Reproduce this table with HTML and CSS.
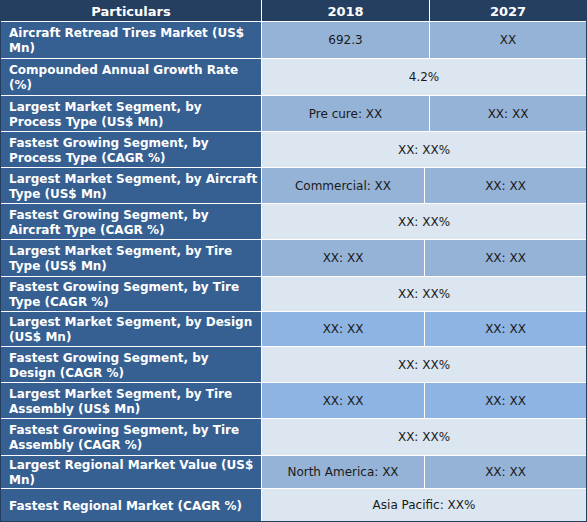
FILE: index.html
```html
<!DOCTYPE html>
<html lang="en">
<head>
    <meta charset="UTF-8">
    <meta name="viewport" content="width=device-width, initial-scale=1.0">
    <title>Aircraft Retread Tires Market - Report Scope</title>
    <link rel="stylesheet" href="styles.css">
</head>
<body>
    <div class="scope-table">
        <div class="row head wide">
            <div class="cell">Particulars</div>
            <div class="cell">2018</div>
            <div class="cell">2027</div>
        </div>

        <div class="row wide">
            <div class="cell label">Aircraft Retread Tires Market (US$ Mn)</div>
            <div class="cell value">692.3</div>
            <div class="cell value">XX</div>
        </div>
        <div class="row">
            <div class="cell label">Compounded Annual Growth Rate (%)</div>
            <div class="cell span">4.2%</div>
        </div>

        <div class="row wide">
            <div class="cell label">Largest Market Segment, by Process Type (US$ Mn)</div>
            <div class="cell value">Pre cure: XX</div>
            <div class="cell value">XX: XX</div>
        </div>
        <div class="row">
            <div class="cell label">Fastest Growing Segment, by Process Type (CAGR %)</div>
            <div class="cell span">XX: XX%</div>
        </div>

        <div class="row">
            <div class="cell label">Largest Market Segment, by Aircraft Type (US$ Mn)</div>
            <div class="cell value">Commercial: XX</div>
            <div class="cell value">XX: XX</div>
        </div>
        <div class="row">
            <div class="cell label">Fastest Growing Segment, by Aircraft Type (CAGR %)</div>
            <div class="cell span">XX: XX%</div>
        </div>

        <div class="row">
            <div class="cell label">Largest Market Segment, by Tire Type (US$ Mn)</div>
            <div class="cell value">XX: XX</div>
            <div class="cell value">XX: XX</div>
        </div>
        <div class="row">
            <div class="cell label">Fastest Growing Segment, by Tire Type (CAGR %)</div>
            <div class="cell span">XX: XX%</div>
        </div>

        <div class="row bright">
            <div class="cell label">Largest Market Segment, by Design (US$ Mn)</div>
            <div class="cell value">XX: XX</div>
            <div class="cell value">XX: XX</div>
        </div>
        <div class="row">
            <div class="cell label">Fastest Growing Segment, by Design (CAGR %)</div>
            <div class="cell span">XX: XX%</div>
        </div>

        <div class="row bright">
            <div class="cell label">Largest Market Segment, by Tire Assembly (US$ Mn)</div>
            <div class="cell value">XX: XX</div>
            <div class="cell value">XX: XX</div>
        </div>
        <div class="row">
            <div class="cell label">Fastest Growing Segment, by Tire Assembly (CAGR %)</div>
            <div class="cell span">XX: XX%</div>
        </div>

        <div class="row">
            <div class="cell label">Largest Regional Market Value (US$ Mn)</div>
            <div class="cell value">North America: XX</div>
            <div class="cell value">XX: XX</div>
        </div>
        <div class="row">
            <div class="cell label">Fastest Regional Market (CAGR %)</div>
            <div class="cell span">Asia Pacific: XX%</div>
        </div>
    </div>
</body>
</html>
```

FILE: styles.css
```css
:root {
    --navy: #243f60;
    --blue: #366092;
    --mid: #95b3d7;
    --bright: #8db4e2;
    --light: #dce6f1;
    --ink: #1a1a1a;
}

* {
    margin: 0;
    padding: 0;
    box-sizing: border-box;
}

body {
    background: #fff;
    font-family: "DejaVu Sans", Verdana, sans-serif;
}

.scope-table {
    width: 587px;
    display: grid;
    grid-template-rows: 21px 36px 36px 35px 35px 35px 35px 36px 34px 34px 35px 35px 36px 32px 32px;
    row-gap: 1px;
    background: #fff;
    border-left: 1px solid var(--navy);
    border-right: 1px solid var(--navy);
    border-bottom: 1px solid var(--navy);
}

.row {
    display: grid;
    grid-template-columns: 260px 162px 1fr;
    column-gap: 1px;
}

.row.wide {
    grid-template-columns: 260px 167px 1fr;
}

.cell {
    display: flex;
    align-items: center;
    justify-content: center;
    text-align: center;
    padding-top: 1px;
    font-size: 12px;
    line-height: 15px;
    color: var(--ink);
    background: var(--mid);
}

.bright .cell {
    background: var(--bright);
}

.cell.label {
    justify-content: flex-start;
    text-align: left;
    padding: 2px 3px 0 8px;
    background: var(--blue);
    color: #fff;
    font-weight: bold;
    font-size: 12px;
}

.cell.span {
    grid-column: 2 / 4;
    background: var(--light);
}

.head .cell {
    background: var(--navy);
    color: #fff;
    font-weight: bold;
    font-size: 13px;
}
```
